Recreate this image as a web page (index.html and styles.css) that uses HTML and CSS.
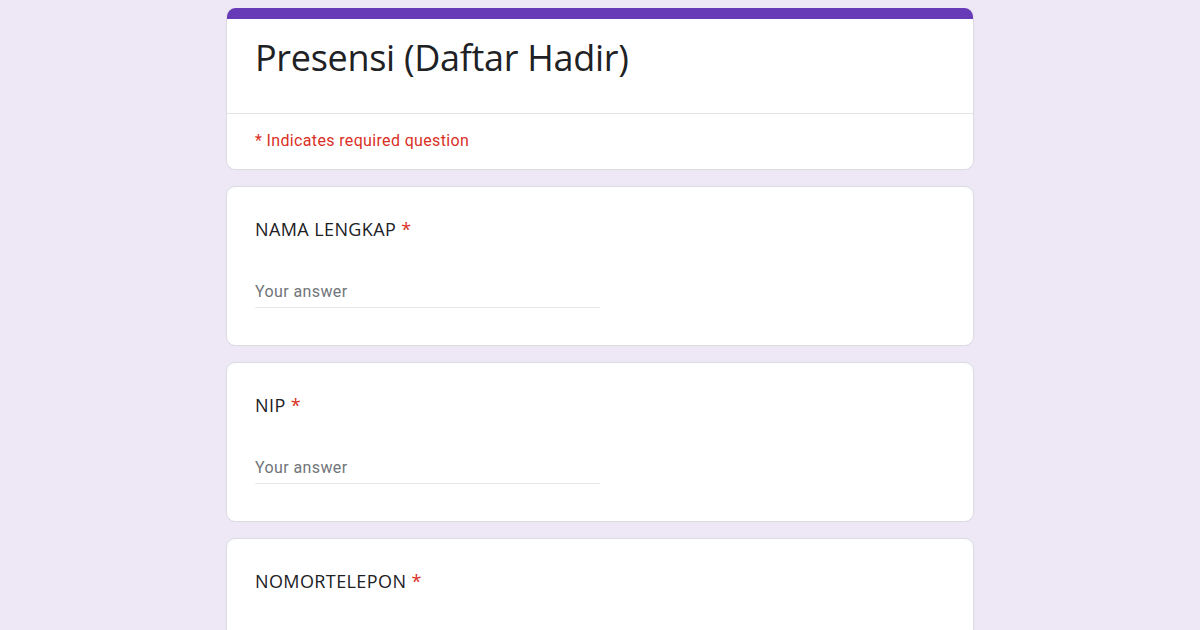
FILE: index.html
```html
<!DOCTYPE html>
<html lang="id">
<head>
<meta charset="utf-8">
<title>Presensi (Daftar Hadir)</title>
<link rel="stylesheet" href="styles.css">
</head>
<body>
<main class="form">
  <section class="card header-card">
    <div class="accent"></div>
    <div class="title-wrap">
      <h1 class="title">Presensi (Daftar Hadir)</h1>
    </div>
    <div class="required-note">* Indicates required question</div>
  </section>

  <section class="card question">
    <div class="q-label">NAMA LENGKAP <span class="star">*</span></div>
    <div class="answer">Your answer</div>
  </section>

  <section class="card question">
    <div class="q-label">NIP <span class="star">*</span></div>
    <div class="answer">Your answer</div>
  </section>

  <section class="card question">
    <div class="q-label">NOMORTELEPON <span class="star">*</span></div>
    <div class="answer">Your answer</div>
  </section>
</main>
</body>
</html>
```

FILE: styles.css
```css
html, body {
  margin: 0;
  padding: 0;
}

body {
  background: #ede7f6;
  font-family: Roboto, "Liberation Sans", Arial, sans-serif;
  color: #202124;
}

.form {
  width: 748px;
  margin: 0 auto;
  padding-top: 8px;
  display: flex;
  flex-direction: column;
  gap: 16px;
}

.card {
  background: #ffffff;
  border: 1px solid #dadce0;
  border-radius: 9px;
  box-sizing: border-box;
  overflow: hidden;
}

.header-card {
  height: 162px;
  border-top: none;
  display: flex;
  flex-direction: column;
}

.accent {
  height: 11px;
  background: #673ab7;
  margin: 0 -1px;
}

.title-wrap {
  height: 95px;
  border-bottom: 1px solid #e4e4e8;
  padding: 15px 28px 0;
  box-sizing: border-box;
}

.title {
  margin: 0;
  font-family: "Open Sans", Roboto, sans-serif;
  font-weight: 400;
  font-size: 36px;
  line-height: 48px;
  letter-spacing: -0.3px;
  color: #202124;
}

.required-note {
  padding: 16px 28px 0;
  font-size: 16px;
  line-height: 22px;
  color: #d93025;
  letter-spacing: 0.35px;
}

.question {
  height: 160px;
  padding: 29px 28px 0;
}

.q-label {
  font-family: "Open Sans", Roboto, sans-serif;
  font-size: 18px;
  line-height: 26px;
  color: #202124;
  letter-spacing: 0.4px;
}

.star {
  color: #d93025;
}

.answer {
  width: 345px;
  margin-top: 39px;
  padding-bottom: 4px;
  border-bottom: 1px solid #e8e8ea;
  font-size: 16px;
  line-height: 22px;
  color: #70757a;
  letter-spacing: 0.4px;
}
```
